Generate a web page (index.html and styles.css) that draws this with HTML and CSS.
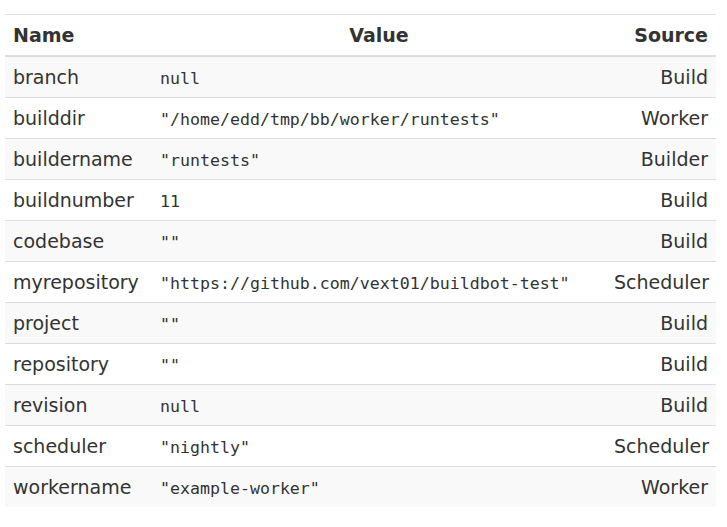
FILE: index.html
```html
<!DOCTYPE html>
<html>
<head>
<meta charset="utf-8">
<link rel="stylesheet" href="styles.css">
</head>
<body>
<div class="wrap">
<table class="props">
<colgroup><col class="c-name"><col class="c-value"><col class="c-source"></colgroup>
<thead>
<tr><th class="name">Name</th><th class="value">Value</th><th class="source">Source</th></tr>
</thead>
<tbody>
<tr><td>branch</td><td><code>null</code></td><td class="source">Build</td></tr>
<tr><td>builddir</td><td><code>"/home/edd/tmp/bb/worker/runtests"</code></td><td class="source">Worker</td></tr>
<tr><td>buildername</td><td><code>"runtests"</code></td><td class="source">Builder</td></tr>
<tr><td>buildnumber</td><td><code>11</code></td><td class="source">Build</td></tr>
<tr><td>codebase</td><td><code>""</code></td><td class="source">Build</td></tr>
<tr><td>myrepository</td><td><code>"https://github.com/vext01/buildbot-test"</code></td><td class="source">Scheduler</td></tr>
<tr><td>project</td><td><code>""</code></td><td class="source">Build</td></tr>
<tr><td>repository</td><td><code>""</code></td><td class="source">Build</td></tr>
<tr><td>revision</td><td><code>null</code></td><td class="source">Build</td></tr>
<tr><td>scheduler</td><td><code>"nightly"</code></td><td class="source">Scheduler</td></tr>
<tr><td>workername</td><td><code>"example-worker"</code></td><td class="source">Worker</td></tr>
</tbody>
</table>
</div>
</body>
</html>
```
FILE: styles.css
```css
html, body {
  margin: 0;
  padding: 0;
  background: #fff;
}
body {
  font-family: "DejaVu Sans", sans-serif;
  font-size: 19px;
  line-height: 24px;
  color: #333;
}
.wrap {
  padding: 14px 11px 0 5px;
}
.props {
  width: 711px;
  border-collapse: collapse;
  border-spacing: 0;
  table-layout: fixed;
}
.c-name { width: 147px; }
.c-value { width: 454px; }
.c-source { width: 110px; }
.props th, .props td {
  padding: 8px;
  height: 24px;
  border-top: 1px solid #ddd;
  text-align: left;
  vertical-align: top;
  white-space: nowrap;
}
.props th {
  font-weight: bold;
  border-bottom: 2px solid #ddd;
}
.props th.value { text-align: center; }
.props .source { text-align: right; }
.props tbody tr:nth-child(odd) { background: #f9f9f9; }
code {
  font-family: "DejaVu Sans Mono", monospace;
  font-size: 16.6px;
  line-height: 1;
  color: #333;
}
```
